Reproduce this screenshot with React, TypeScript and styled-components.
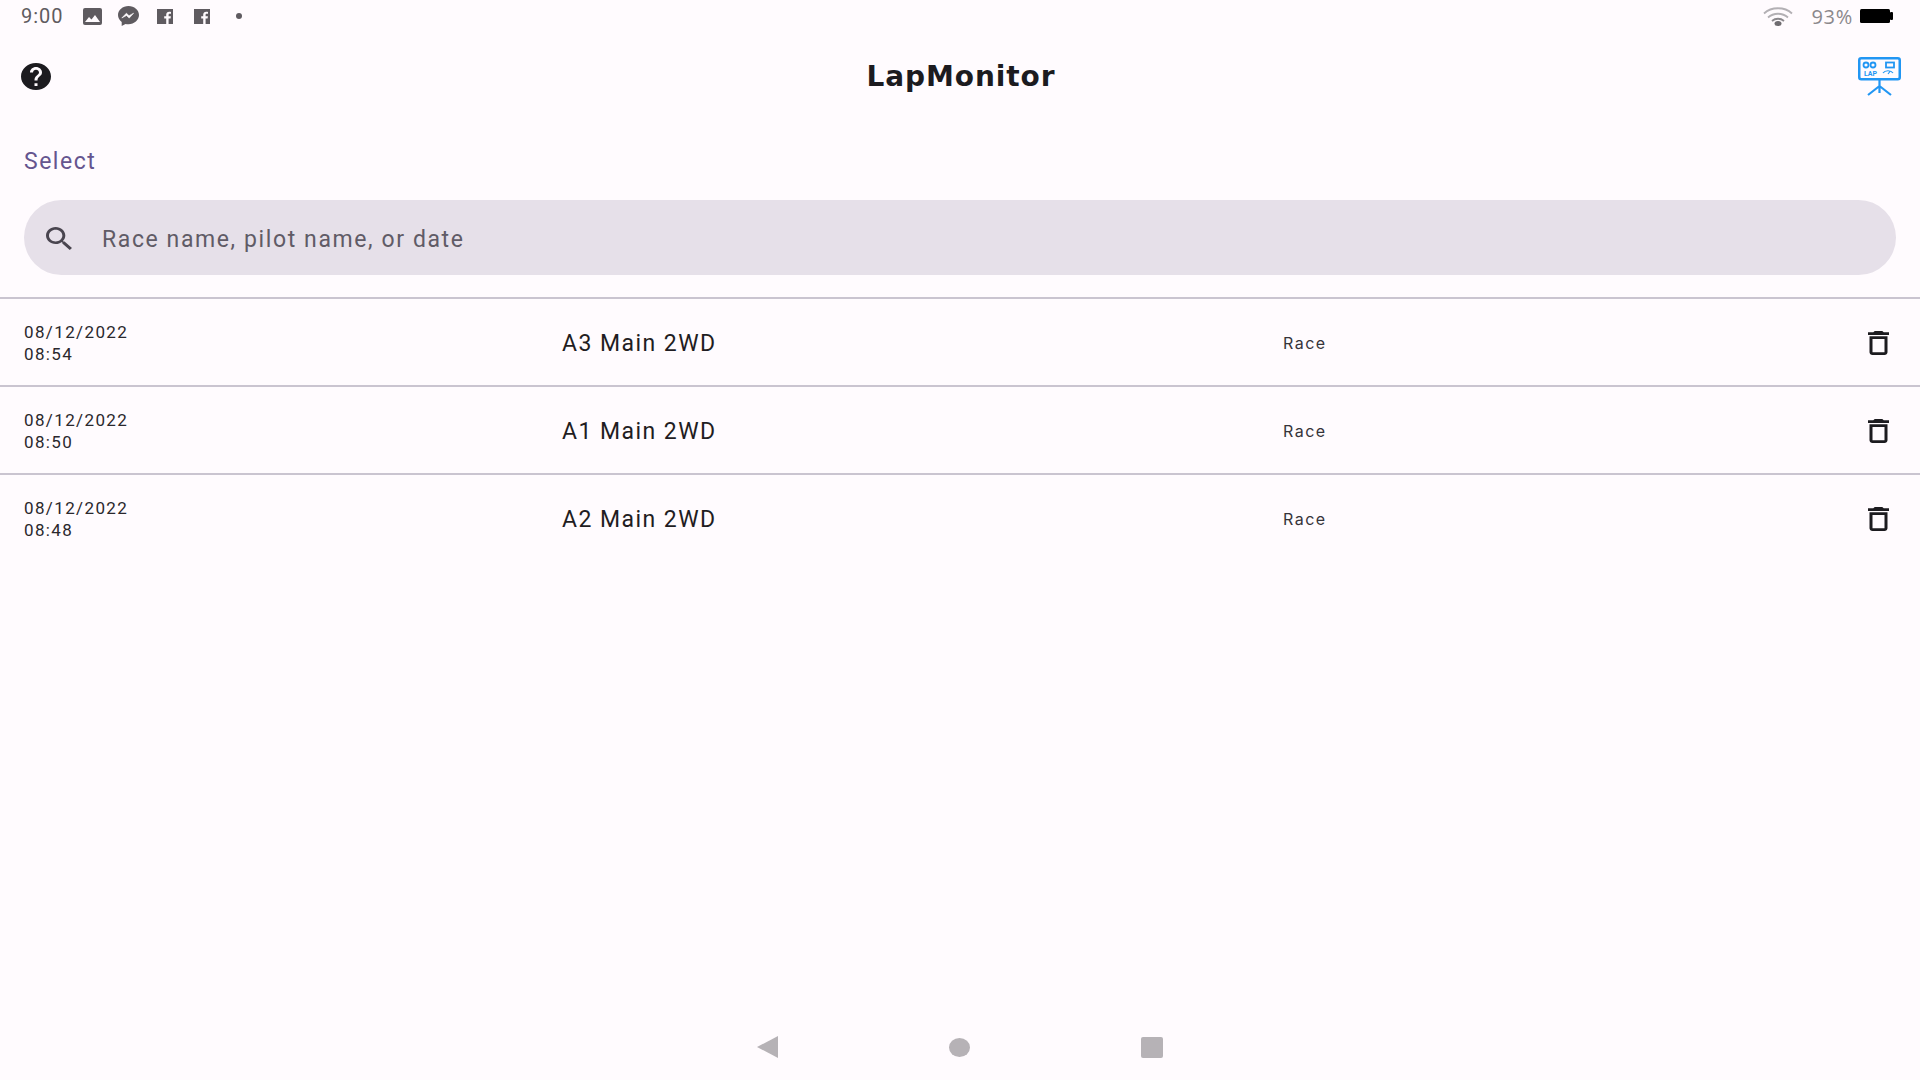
import React from 'react';
import styled, { createGlobalStyle } from 'styled-components';

const GlobalStyle = createGlobalStyle`
    html, body {
        margin: 0;
        padding: 0;
        background: #fffbfe;
    }
    body {
        font-family: Roboto, "Liberation Sans", sans-serif;
    }
`;

const Screen = styled.div`
    display: flex;
    flex-direction: column;
    width: 1920px;
    height: 1080px;
    overflow: hidden;
    background: #fffbfe;
    color: #1c1b1f;
`;

const StatusBar = styled.div`
    display: flex;
    align-items: center;
    height: 32px;
    padding: 0 27px 0 21px;
    color: #5f5b60;
`;

const StatusTime = styled.span`
    width: 53px;
    font-size: 20px;
    letter-spacing: 1px;
`;

const NotificationIcons = styled.div`
    display: grid;
    grid-auto-flow: column;
    grid-auto-columns: 36.6px;
    justify-items: center;
    align-items: center;
    flex: 1;
    justify-content: start;
`;

const SystemIcons = styled.div`
    display: flex;
    align-items: center;
`;

const BatteryText = styled.span`
    font-family: "Open Sans", sans-serif;
    font-size: 20px;
    letter-spacing: 0.7px;
    color: #8b888c;
    margin: 0 7px 0 18px;
`;

const AppBar = styled.header`
    display: grid;
    grid-template-columns: 1fr auto 1fr;
    align-items: center;
    height: 88px;
    padding: 0 19px 0 21px;
`;

const Title = styled.h1`
    margin: 2px 0 0;
    font-family: "DejaVu Sans", sans-serif;
    font-size: 28px;
    font-weight: 700;
    line-height: 32px;
    letter-spacing: 0.9px;
    color: #1c1b1f;
`;

const AppBarLeft = styled.div`
    display: flex;
`;

const AppBarRight = styled.div`
    display: flex;
    justify-content: flex-end;
`;

const SectionLabel = styled.div`
    margin-top: 27px;
    padding: 0 24px;
    font-size: 23px;
    line-height: 30px;
    letter-spacing: 1.5px;
    color: #65558f;
`;

const SearchBar = styled.div`
    display: flex;
    align-items: center;
    gap: 30px;
    height: 75px;
    margin: 23px 24px 22px;
    padding: 0 25px 0 22px;
    border-radius: 38px;
    background: #e6e0e9;
`;

const SearchGlyph = styled.svg`
    margin-top: 2px;
`;

const Placeholder = styled.span`
    padding-top: 4px;
    font-size: 23px;
    letter-spacing: 1.6px;
    color: #605b66;
`;

const RaceList = styled.div`
    display: flex;
    flex-direction: column;
    border-top: 2px solid #cac4d0;
`;

const RaceRow = styled.div`
    display: grid;
    grid-template-columns: 538px 721px 1fr auto;
    align-items: center;
    height: 84px;
    padding: 2px 31px 0 24px;
    & + & {
        border-top: 2px solid #cac4d0;
    }
`;

const DateCell = styled.div`
    font-size: 17px;
    line-height: 22px;
    letter-spacing: 1.37px;
    color: #2a282d;
`;

const RaceName = styled.div`
    font-size: 23px;
    letter-spacing: 1.45px;
    color: #1f1d22;
`;

const RaceType = styled.div`
    font-family: Inter, sans-serif;
    font-size: 16px;
    letter-spacing: 1.5px;
    color: #36343a;
`;

const NavBar = styled.nav`
    display: flex;
    justify-content: center;
    align-items: center;
    gap: 171px;
    margin-top: auto;
    height: 66px;
`;

const NavCircle = styled.div`
    width: 21px;
    height: 19px;
    border-radius: 50%;
    background: #b6b2b6;
`;

const NavSquare = styled.div`
    width: 22px;
    height: 21px;
    border-radius: 2px;
    background: #b6b2b6;
`;

const ImageIcon = () => (
    <svg width="19" height="17" viewBox="0 0 19 17">
        <rect width="19" height="17" rx="2" fill="#5f5b60" />
        <path d="M2 14l4-5 2.5 2.5L12 7l5 7z" fill="#fffbfe" />
    </svg>
);

const MessengerIcon = () => (
    <svg width="21" height="20" viewBox="0 0 21 20">
        <path d="M10.5 0C4.7 0 0 4 0 9c0 2.8 1.4 5.2 3.7 6.9V20l3.8-2.1c1 .2 2 .3 3 .3 5.8 0 10.5-4 10.5-9.1S16.3 0 10.5 0z" fill="#5f5b60" />
        <path d="M3.8 12l4.6-4.8 2.6 2.5 4.6-2.5-4.4 4.9-2.7-2.6z" fill="#fffbfe" stroke="#fffbfe" strokeWidth="0.6" />
    </svg>
);

const FacebookIcon = () => (
    <svg width="16" height="15" viewBox="0 0 16 15">
        <path fillRule="evenodd" d="M0 0h16v15h-4.4V9.4h2l.3-2.2h-2.3V5.9c0-.7.2-1.1 1.1-1.1H14V2.9c-.3 0-1-.1-1.8-.1-1.8 0-3 1-3 3v1.4h-2v2.2h2V15H0z" fill="#5f5b60" />
    </svg>
);

const DotIcon = () => (
    <svg width="6" height="6" viewBox="0 0 6 6">
        <circle cx="3" cy="3" r="3" fill="#5f5b60" />
    </svg>
);

const WifiIcon = () => (
    <svg width="30" height="19" viewBox="0 0 30 19" fill="none" stroke="#b3b0b4" strokeWidth="1.8">
        <path d="M1 6.5C8.5 -0.5 21.5 -0.5 29 6.5" />
        <path d="M5 10.5C10.5 5.5 19.5 5.5 25 10.5" />
        <path d="M9 14C12.5 11 17.5 11 21 14" stroke="#8b888c" />
        <ellipse cx="15" cy="16.5" rx="3.5" ry="2.5" fill="#6f6c70" stroke="none" />
    </svg>
);

const BatteryIcon = () => (
    <svg width="33" height="14" viewBox="0 0 33 14">
        <rect width="30" height="14" rx="1.5" fill="#000" />
        <rect x="30" y="3" width="3" height="8" rx="1" fill="#000" />
    </svg>
);

const HelpIcon = () => (
    <svg width="30" height="27" viewBox="2 2 20 20" preserveAspectRatio="none">
        <path
            fill="#1c1b1f"
            d="M12 2C6.48 2 2 6.48 2 12s4.48 10 10 10 10-4.48 10-10S17.52 2 12 2zm1 17h-2v-2h2v2zm2.07-7.75l-.9.92C13.45 12.9 13 13.5 13 15h-2v-.5c0-1.1.45-2.1 1.17-2.83l1.24-1.26c.37-.36.59-.86.59-1.41 0-1.1-.9-2-2-2s-2 .9-2 2H8c0-2.21 1.79-4 4-4s4 1.79 4 4c0 .88-.36 1.68-.93 2.25z"
        />
    </svg>
);

const LapLogo = () => (
    <svg width="43" height="39" viewBox="0 0 43 39" fill="none" stroke="#2196f3" strokeWidth="2.5">
        <rect x="1.25" y="1.25" width="40.5" height="21" rx="2" />
        <circle cx="8" cy="8" r="2.5" strokeWidth="1.8" />
        <circle cx="15" cy="8" r="2.5" strokeWidth="1.8" />
        <rect x="28" y="5.5" width="8" height="5" strokeWidth="1.8" />
        <text x="6" y="18.5" fontFamily="Roboto, sans-serif" fontSize="7" fontWeight="700" fill="#2196f3" stroke="none">LAP</text>
        <path d="M25 16c2-3 8-3 10 0M30 17l2-2.5" strokeWidth="1.2" />
        <path d="M21.5 23v13M21.5 29L10 38M21.5 29L33 38" strokeWidth="2.2" />
    </svg>
);

const SearchIcon = () => (
    <SearchGlyph width="26" height="23" viewBox="3 3 17.5 17.5" preserveAspectRatio="none">
        <path
            fill="#49454f"
            d="M15.5 14h-.79l-.28-.27C15.41 12.59 16 11.11 16 9.5 16 5.91 13.09 3 9.5 3S3 5.91 3 9.5 5.91 16 9.5 16c1.61 0 3.09-.59 4.23-1.57l.27.28v.79l5 4.99L20.49 19l-4.99-5zm-6 0C7.01 14 5 11.99 5 9.5S7.01 5 9.5 5 14 7.01 14 9.5 11.99 14 9.5 14z"
        />
    </SearchGlyph>
);

const TrashIcon = () => (
    <svg width="21" height="24" viewBox="5 3 14 18" preserveAspectRatio="none">
        <path
            fill="#1c1b1f"
            d="M6 19c0 1.1.9 2 2 2h8c1.1 0 2-.9 2-2V7H6v12zM8 9h8v10H8V9zm7.5-5l-1-1h-5l-1 1H5v2h14V4h-3.5z"
        />
    </svg>
);

const BackIcon = () => (
    <svg width="21" height="22" viewBox="0 0 21 22">
        <path d="M21 0v22L0 11z" fill="#b6b2b6" />
    </svg>
);

const races = [
    { date: '08/12/2022', time: '08:54', name: 'A3 Main 2WD' },
    { date: '08/12/2022', time: '08:50', name: 'A1 Main 2WD' },
    { date: '08/12/2022', time: '08:48', name: 'A2 Main 2WD' },
];

export default function App() {
    return (
        <Screen>
            <GlobalStyle />
            <StatusBar>
                <StatusTime>9:00</StatusTime>
                <NotificationIcons>
                    <ImageIcon />
                    <MessengerIcon />
                    <FacebookIcon />
                    <FacebookIcon />
                    <DotIcon />
                </NotificationIcons>
                <SystemIcons>
                    <WifiIcon />
                    <BatteryText>93%</BatteryText>
                    <BatteryIcon />
                </SystemIcons>
            </StatusBar>
            <AppBar>
                <AppBarLeft>
                    <HelpIcon />
                </AppBarLeft>
                <Title>LapMonitor</Title>
                <AppBarRight>
                    <LapLogo />
                </AppBarRight>
            </AppBar>
            <SectionLabel>Select</SectionLabel>
            <SearchBar>
                <SearchIcon />
                <Placeholder>Race name, pilot name, or date</Placeholder>
            </SearchBar>
            <RaceList>
                {races.map((race) => (
                    <RaceRow key={race.name}>
                        <DateCell>
                            {race.date}
                            <br />
                            {race.time}
                        </DateCell>
                        <RaceName>{race.name}</RaceName>
                        <RaceType>Race</RaceType>
                        <TrashIcon />
                    </RaceRow>
                ))}
            </RaceList>
            <NavBar>
                <BackIcon />
                <NavCircle />
                <NavSquare />
            </NavBar>
        </Screen>
    );
}
